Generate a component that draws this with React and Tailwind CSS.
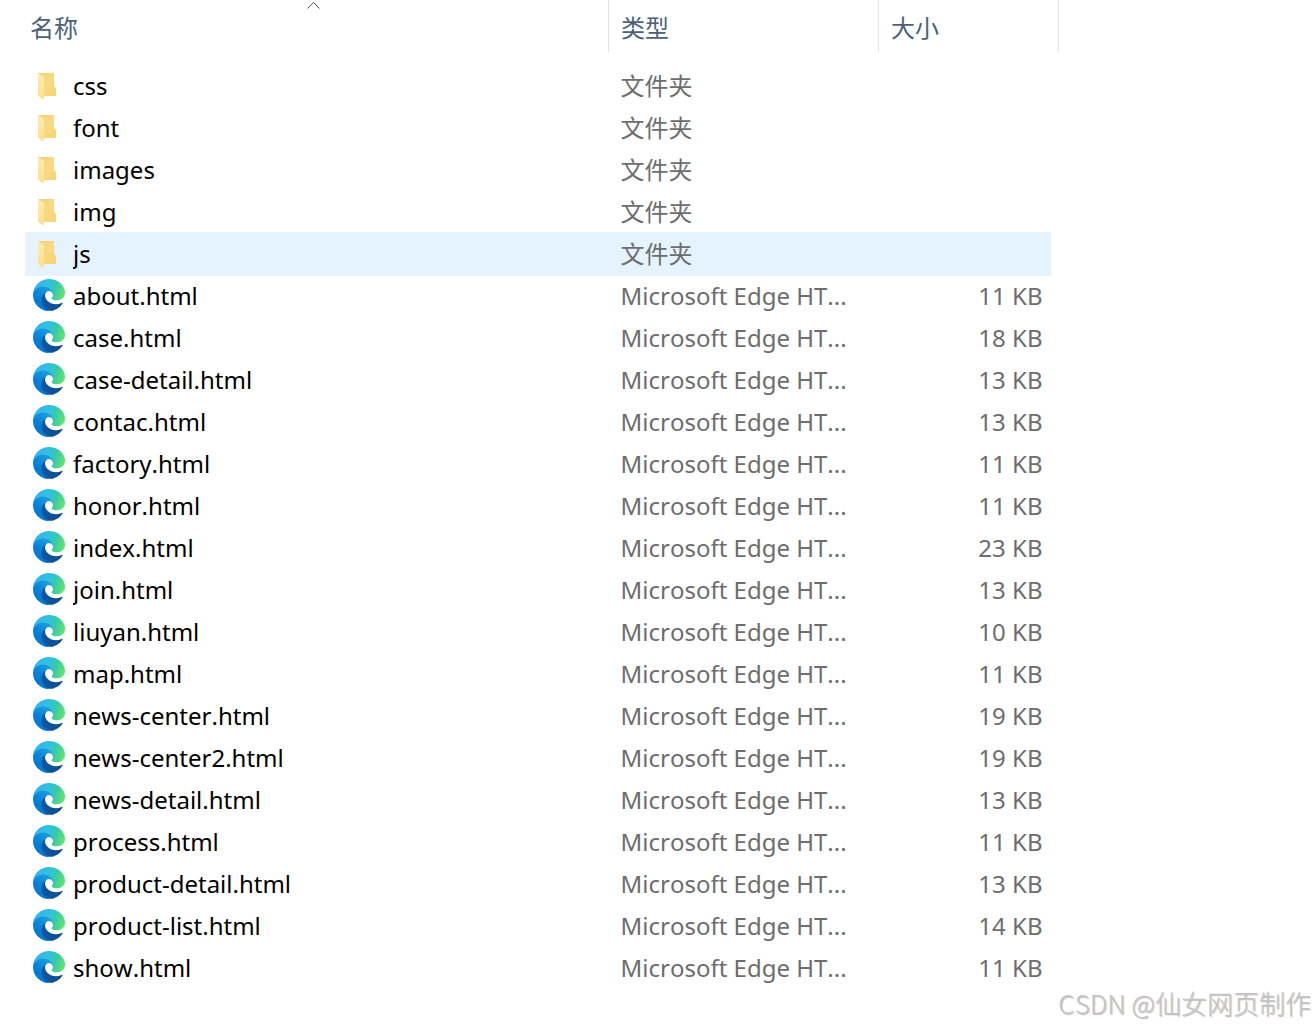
import React, { useState } from "react";

const folders = ["css", "font", "images", "img", "js"];

const pages = [
  { name: "about.html", size: 11 },
  { name: "case.html", size: 18 },
  { name: "case-detail.html", size: 13 },
  { name: "contac.html", size: 13 },
  { name: "factory.html", size: 11 },
  { name: "honor.html", size: 11 },
  { name: "index.html", size: 23 },
  { name: "join.html", size: 13 },
  { name: "liuyan.html", size: 10 },
  { name: "map.html", size: 11 },
  { name: "news-center.html", size: 19 },
  { name: "news-center2.html", size: 19 },
  { name: "news-detail.html", size: 13 },
  { name: "process.html", size: 11 },
  { name: "product-detail.html", size: 13 },
  { name: "product-list.html", size: 14 },
  { name: "show.html", size: 11 },
];

const files = [
  ...folders.map((name) => ({ name, type: "文件夹", folder: true })),
  ...pages.map((page) => ({ ...page, type: "Microsoft Edge HT..." })),
];

// Gradients and shapes shared by every row icon
const IconSprite = () => (
  <svg className="absolute h-0 w-0" aria-hidden="true">
    <defs>
      <linearGradient id="edge-dark" x1="63" y1="178" x2="242" y2="178" gradientUnits="userSpaceOnUse">
        <stop offset="0" stopColor="#0c59a4" />
        <stop offset="1" stopColor="#114a8b" />
      </linearGradient>
      <linearGradient id="edge-blue" x1="150" y1="95" x2="46" y2="220" gradientUnits="userSpaceOnUse">
        <stop offset="0" stopColor="#1b9de2" />
        <stop offset="0.2" stopColor="#1595df" />
        <stop offset="0.67" stopColor="#0680d7" />
        <stop offset="1" stopColor="#0078d4" />
      </linearGradient>
      <linearGradient id="edge-green" x1="30" y1="60" x2="250" y2="130" gradientUnits="userSpaceOnUse">
        <stop offset="0" stopColor="#35b5ee" />
        <stop offset="0.4" stopColor="#2fc2df" />
        <stop offset="0.65" stopColor="#35c8b0" />
        <stop offset="1" stopColor="#62e36c" />
      </linearGradient>
      <linearGradient id="folder-back" x1="0" y1="0" x2="1" y2="1">
        <stop offset="0" stopColor="#f3d078" />
        <stop offset="0.5" stopColor="#f8da82" />
        <stop offset="1" stopColor="#f6d277" />
      </linearGradient>
      <linearGradient id="folder-flap" x1="0" y1="0" x2="0" y2="1">
        <stop offset="0" stopColor="#ffeab0" />
        <stop offset="1" stopColor="#fde08e" />
      </linearGradient>
    </defs>
    <symbol id="edge" viewBox="0 0 256 256">
      <g transform="translate(-4.63 -4.92)">
        <path
          fill="url(#edge-dark)"
          d="M235.68 195.46a93.73 93.73 0 0 1-10.54 4.71 101.87 101.87 0 0 1-35.9 6.46c-47.32 0-88.54-32.55-88.54-74.32A31.48 31.48 0 0 1 117.13 105c-42.8 1.8-53.8 46.4-53.8 72.53 0 73.88 68.09 81.37 82.76 81.37 7.91 0 19.84-2.3 27-4.56l1.31-.44a128.34 128.34 0 0 0 66.6-52.8 4 4 0 0 0-5.32-5.64Z"
        />
        <path
          fill="url(#edge-blue)"
          d="M110.34 246.34A79.2 79.2 0 0 1 87.6 225a80.72 80.72 0 0 1 29.53-120c3.12-1.47 8.45-4.13 15.54-4a32.35 32.35 0 0 1 25.69 13 31.88 31.88 0 0 1 6.36 18.66c0-.21 24.46-79.6-80-79.6-43.9 0-80 41.66-80 78.21a130.15 130.15 0 0 0 12.11 56 128 128 0 0 0 156.38 67.11 75.55 75.55 0 0 1-62.78-8Z"
        />
        <path
          fill="url(#edge-green)"
          d="M156.94 153.78c-.81 1.05-3.3 2.5-3.3 5.66 0 2.61 1.7 5.12 4.72 7.23 14.38 10 41.49 8.68 41.56 8.68a59.56 59.56 0 0 0 30.27-8.35 61.38 61.38 0 0 0 30.43-52.88c.26-22.41-8-37.31-11.34-43.91C228.09 28.76 182.35 4.92 132.61 4.92a128 128 0 0 0-128 126.2c.48-36.54 36.8-66.05 80-66.05 3.5 0 23.46.34 42 10.07 16.34 8.58 24.9 18.94 30.85 29.21 6.18 10.67 7.28 24.15 7.28 29.52s-2.74 13.33-7.8 19.91Z"
        />
      </g>
    </symbol>
    <symbol id="folder" viewBox="0 0 32 32">
      <path fill="url(#folder-back)" d="M5 4H21V17L23 19V27H10.5L5 25Z" />
      <path fill="url(#folder-flap)" d="M5 4 11 8V28.5Q11 31 9 30L5 26.5Z" />
    </symbol>
  </svg>
);

const HeaderCell = ({ label, sorted, colSpan, onSort }) => (
  <th
    colSpan={colSpan}
    aria-sort={sorted ? "ascending" : undefined}
    className="relative border-r border-[#e2e2e2] py-0 pr-0 pl-3"
  >
    <button
      type="button"
      onClick={onSort}
      className="flex h-[52px] w-full items-center pt-1 text-left font-normal text-[#4c607a]"
    >
      {label}
    </button>
    {sorted && (
      <svg className="absolute inset-x-0 top-0.5 mx-auto h-[7px] w-[13px]" viewBox="0 0 13 7" fill="none">
        <path d="M0.5 6.5 6.5 0.5 12.5 6.5" stroke="#555" />
      </svg>
    )}
  </th>
);

const FileRow = ({ file, active, onHover }) => {
  const bg = active ? "bg-[#e5f3ff] shadow-[0_1px_0_#e5f3ff,0_-1px_0_#e5f3ff]" : "";

  return (
    <tr onMouseEnter={onHover}>
      <td></td>
      <td className={`p-0 ${bg}`}>
        <a href={`#${file.name}`} className="flex items-center gap-2 pl-2 text-black">
          <svg className="mb-0.5 h-8 w-8 shrink-0" aria-hidden="true">
            <use href={file.folder ? "#folder" : "#edge"} />
          </svg>
          <span className="truncate">{file.name}</span>
        </a>
      </td>
      <td className={`p-0 pl-3 text-[#6d6d6d] ${bg}`}>{file.type}</td>
      <td className={`p-0 pr-2 text-right text-[#6d6d6d] ${bg}`}>{file.size && `${file.size} KB`}</td>
      <td></td>
    </tr>
  );
};

const App = () => {
  const [sortBy, setSortBy] = useState("name");
  const [active, setActive] = useState("js");

  return (
    <div className="relative min-h-screen bg-white pr-64 pl-[18px] font-['Noto_Sans','Noto_Sans_CJK_SC',sans-serif] [font-kerning:none]">
      <IconSprite />
      <table className="w-full table-fixed border-collapse text-2xl leading-[42px]">
        <colgroup>
          <col className="w-[7px]" />
          <col />
          <col className="w-[270px]" />
          <col className="w-[172px]" />
          <col className="w-2" />
        </colgroup>
        <thead>
          <tr>
            <HeaderCell label="名称" colSpan={2} sorted={sortBy === "name"} onSort={() => setSortBy("name")} />
            <HeaderCell label="类型" sorted={sortBy === "type"} onSort={() => setSortBy("type")} />
            <HeaderCell label="大小" colSpan={2} sorted={sortBy === "size"} onSort={() => setSortBy("size")} />
          </tr>
        </thead>
        <tbody className="before:block before:h-[13px]">
          {files.map((file) => (
            <FileRow
              key={file.name}
              file={file}
              active={active === file.name}
              onHover={() => setActive(file.name)}
            />
          ))}
        </tbody>
      </table>

      <p className="absolute right-1 bottom-1 font-['Noto_Sans_CJK_SC',sans-serif] text-[26px] leading-9 font-light text-[#c4c4c4] [text-shadow:1px_1px_1px_#bbb]">
        CSDN @仙女网页制作
      </p>
    </div>
  );
};

export default App;
